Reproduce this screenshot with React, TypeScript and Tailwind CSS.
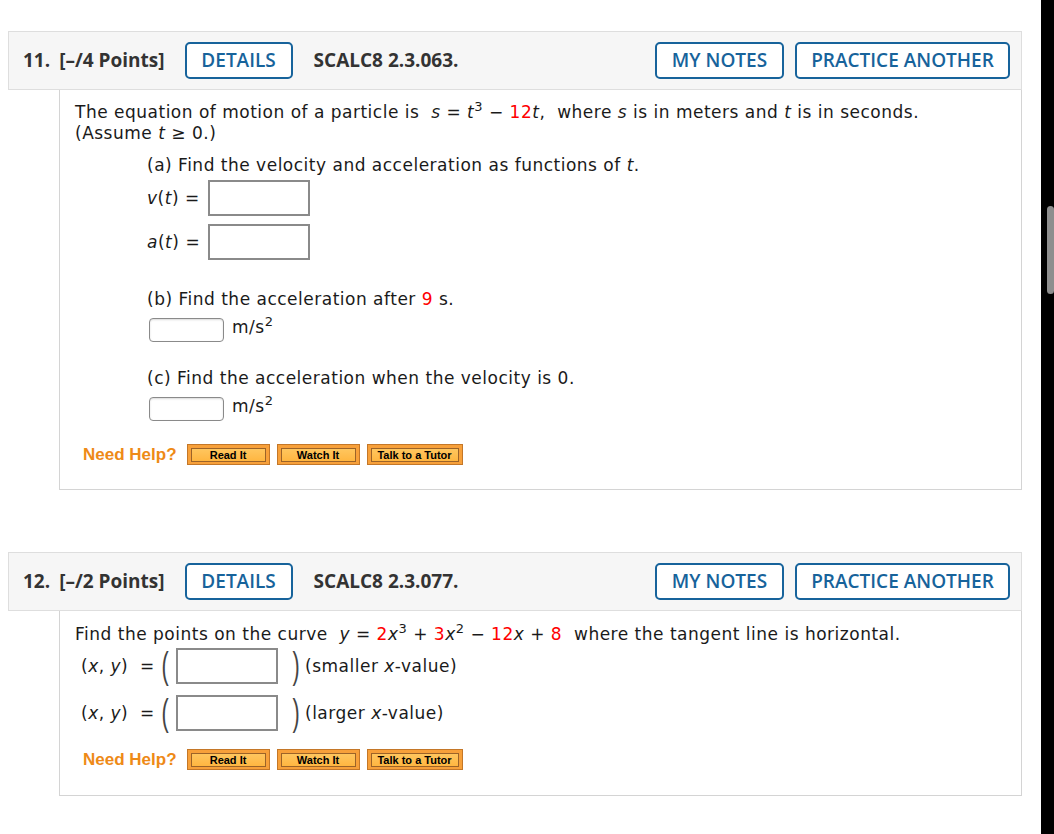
const body = "font-['DejaVu_Sans',Verdana,sans-serif] text-[17px] tracking-[0.5px] text-[#1a1a1a]";
const head = "font-['Open_Sans',Arial,sans-serif]";

function OutlineButton({ label, w }: { label: string; w: string }) {
  return (
    <button
      className={`${head} ${w} h-[37px] rounded-[5px] border-2 border-[#17639b] text-[#17639b] text-[19px] font-semibold bg-white leading-none flex items-center justify-center`}
    >
      {label}
    </button>
  );
}

function HelpButton({ label, w }: { label: string; w: string }) {
  return (
    <span className={`${w} h-[21px] flex border border-[#c47728] bg-[#f7a03a] pt-[3px] pb-[2px] px-[3px]`}>
      <span className="flex-1 flex items-center justify-center border border-[#9c6328] bg-gradient-to-b from-[#ffc65e] to-[#ffb640] font-['Liberation_Sans',Arial,sans-serif] text-[11px] tracking-normal font-bold text-black leading-none">
        {label}
      </span>
    </span>
  );
}

function NeedHelp() {
  return (
    <div className="flex items-center ml-[8px]">
      <span className="font-['Liberation_Sans',Arial,sans-serif] text-[17px] tracking-normal font-bold text-[#ee8a17] mr-[10px]">
        Need Help?
      </span>
      <div className="flex gap-[7px]">
        <HelpButton label="Read It" w="w-[83px]" />
        <HelpButton label="Watch It" w="w-[83px]" />
        <HelpButton label="Talk to a Tutor" w="w-[96px]" />
      </div>
    </div>
  );
}

function Header({ num, pts, code }: { num: string; pts: string; code: string }) {
  return (
    <div className="h-[59px] flex items-center bg-[#f6f6f6] border border-[#dedede] pl-[14px] pr-[11px]">
      <span className={`${head} text-[19px] font-bold text-[#333]`}>{num}</span>
      <span className={`${head} text-[19px] font-bold text-[#333] ml-[9px]`}>{pts}</span>
      <div className="ml-[20px]">
        <OutlineButton label="DETAILS" w="w-[108px]" />
      </div>
      <span className={`${head} text-[19px] font-bold text-[#333] ml-[21px]`}>{code}</span>
      <div className="ml-auto flex gap-[11px]">
        <OutlineButton label="MY NOTES" w="w-[129px]" />
        <OutlineButton label="PRACTICE ANOTHER" w="w-[215px]" />
      </div>
    </div>
  );
}

const R = ({ children }: { children: React.ReactNode }) => <span className="text-[#ff0000]">{children}</span>;
const I = ({ children }: { children: React.ReactNode }) => <i>{children}</i>;
const Sup = ({ children }: { children: React.ReactNode }) => (
  <sup className="text-[13px] relative top-[-7px] align-baseline">{children}</sup>
);

function BigBox() {
  return <span className="block w-[102px] h-[36px] border-2 border-[#8a8a8a] bg-white" />;
}

function SmallBox() {
  return (
    <span className="block w-[75px] h-[24px] rounded-[4px] border border-[#8a8a8a] bg-white shadow-[inset_0_1px_2px_rgba(0,0,0,0.15)]" />
  );
}

function Paren({ ch }: { ch: string }) {
  return (
    <span className="font-['Liberation_Sans',sans-serif] font-normal text-[36px] leading-none text-[#444] scale-x-[0.6] inline-block">
      {ch}
    </span>
  );
}

function PointRow({ note }: { note: string }) {
  return (
    <div className="flex items-center ml-[6px]">
      <span className="w-[78px]">
        (<I>x</I>, <I>y</I>) &nbsp;=
      </span>
      <Paren ch="(" />
      <span className="ml-[4px]">
        <BigBox />
      </span>
      <span className="ml-[12px]">
        <Paren ch=")" />
      </span>
      <span className="ml-[3px]">
        ({note} <I>x</I>-value)
      </span>
    </div>
  );
}

function FnRow({ name }: { name: string }) {
  return (
    <div className="flex items-center">
      <span>
        <I>{name}</I>(<I>t</I>)
      </span>
      <span className="ml-[6px]">=</span>
      <span className="ml-[8px]">
        <BigBox />
      </span>
    </div>
  );
}

function Question11() {
  return (
    <div>
      <Header num="11." pts="[–/4 Points]" code="SCALC8 2.3.063." />
      <div className={`${body} ml-[51px] border-l border-r border-b border-[#d4d4d4] pl-[15px] pt-[12px] pb-[24px] leading-[21px]`}>
        <p>
          The equation of motion of a particle is&nbsp; <I>s</I> = <I>t</I>
          <Sup>3</Sup> − <R>12</R>
          <I>t</I>,&nbsp; where <I>s</I> is in meters and <I>t</I> is in seconds.
          <br />
          (Assume <I>t</I> ≥ 0.)
        </p>
        <div className="ml-[72px]">
          <p className="mt-[11px]">
            (a) Find the velocity and acceleration as functions of <I>t</I>.
          </p>
          <div className="mt-[4px]">
            <FnRow name="v" />
          </div>
          <div className="mt-[8px]">
            <FnRow name="a" />
          </div>
          <p className="mt-[29px]">
            (b) Find the acceleration after <R>9</R> s.
          </p>
          <div className="mt-[8px] flex items-center gap-[8px] ml-[2px]">
            <SmallBox />
            <span className="-mt-[6px]">
              m/s<Sup>2</Sup>
            </span>
          </div>
          <p className="mt-[26px]">(c) Find the acceleration when the velocity is 0.</p>
          <div className="mt-[8px] flex items-center gap-[8px] ml-[2px]">
            <SmallBox />
            <span className="-mt-[6px]">
              m/s<Sup>2</Sup>
            </span>
          </div>
        </div>
        <div className="mt-[23px]">
          <NeedHelp />
        </div>
      </div>
    </div>
  );
}

function Question12() {
  return (
    <div className="mt-[62px]">
      <Header num="12." pts="[–/2 Points]" code="SCALC8 2.3.077." />
      <div className={`${body} ml-[51px] border-l border-r border-b border-[#d4d4d4] pl-[15px] pt-[13px] pb-[25px] leading-[21px]`}>
        <p>
          Find the points on the curve&nbsp; <I>y</I> = <R>2</R>
          <I>x</I>
          <Sup>3</Sup> + <R>3</R>
          <I>x</I>
          <Sup>2</Sup> − <R>12</R>
          <I>x</I> + <R>8</R>&nbsp; where the tangent line is horizontal.
        </p>
        <div className="mt-[3px]">
          <PointRow note="smaller" />
        </div>
        <div className="mt-[11px]">
          <PointRow note="larger" />
        </div>
        <div className="mt-[18px]">
          <NeedHelp />
        </div>
      </div>
    </div>
  );
}

export default function App() {
  return (
    <div className="h-[834px] w-[1054px] flex bg-white overflow-hidden">
      <div className="w-[1041px] pt-[31px] pl-[8px] pr-[19px]">
        <Question11 />
        <Question12 />
      </div>
      <div className="w-[13px] bg-black pt-[206px] pl-[6px]">
        <div className="w-[7px] h-[88px] rounded-full bg-[#8e8e8e]" />
      </div>
    </div>
  );
}
